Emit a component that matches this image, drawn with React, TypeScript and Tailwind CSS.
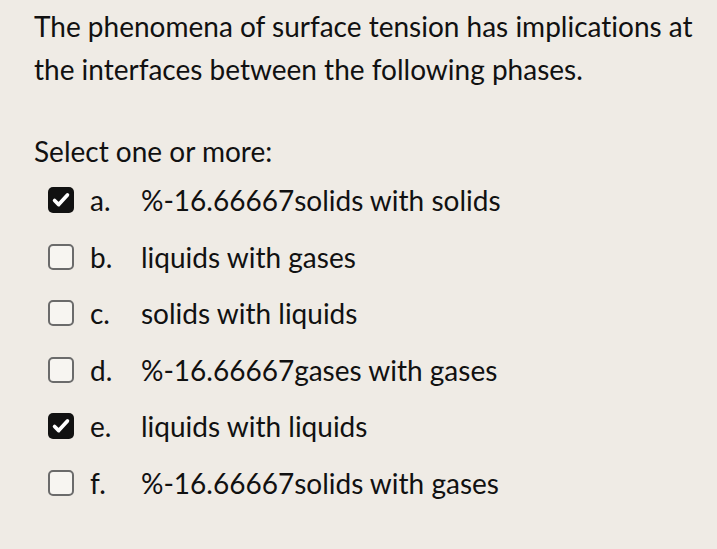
import React from "react";

type Option = { letter: string; text: string; checked: boolean };

const options: Option[] = [
  { letter: "a.", text: "%-16.66667solids with solids", checked: true },
  { letter: "b.", text: "liquids with gases", checked: false },
  { letter: "c.", text: "solids with liquids", checked: false },
  { letter: "d.", text: "%-16.66667gases with gases", checked: false },
  { letter: "e.", text: "liquids with liquids", checked: true },
  { letter: "f.", text: "%-16.66667solids with gases", checked: false },
];

function Box({ checked }: { checked: boolean }) {
  if (checked) {
    return (
      <span className="flex h-[26px] w-[26px] shrink-0 items-center justify-center rounded-[5px] bg-[#111]">
        <svg viewBox="0 0 24 24" className="h-[22px] w-[22px]" fill="none" stroke="#fff" strokeWidth={4} strokeLinecap="round" strokeLinejoin="round">
          <path d="M5 12.5l4.5 4.5L19 6.5" />
        </svg>
      </span>
    );
  }
  return <span className="block h-[26px] w-[26px] shrink-0 rounded-[5px] border-2 border-[#6b6b6b] bg-[#f7f5f1]" />;
}

export default function App() {
  return (
    <div className="min-h-screen bg-[#efebe5] pl-[34px] pr-[12px] pt-[5px] text-[#111] font-['Lato','Liberation_Sans',sans-serif] [font-variant-ligatures:none]">
      <p className="text-[28px] leading-[43px]">
        The phenomena of surface tension has implications at the interfaces between the following phases.
      </p>
      <p className="mt-[39px] text-[28px] leading-[43px]">Select one or more:</p>
      <div className="mt-[-1px] flex flex-col">
        {options.map((o) => (
          <div key={o.letter} className="flex h-[56.5px] items-center pl-[14px]">
            <Box checked={o.checked} />
            <span className="ml-[16px] w-[51px] text-[28px]">{o.letter}</span>
            <span className="text-[28px]">{o.text}</span>
          </div>
        ))}
      </div>
    </div>
  );
}
